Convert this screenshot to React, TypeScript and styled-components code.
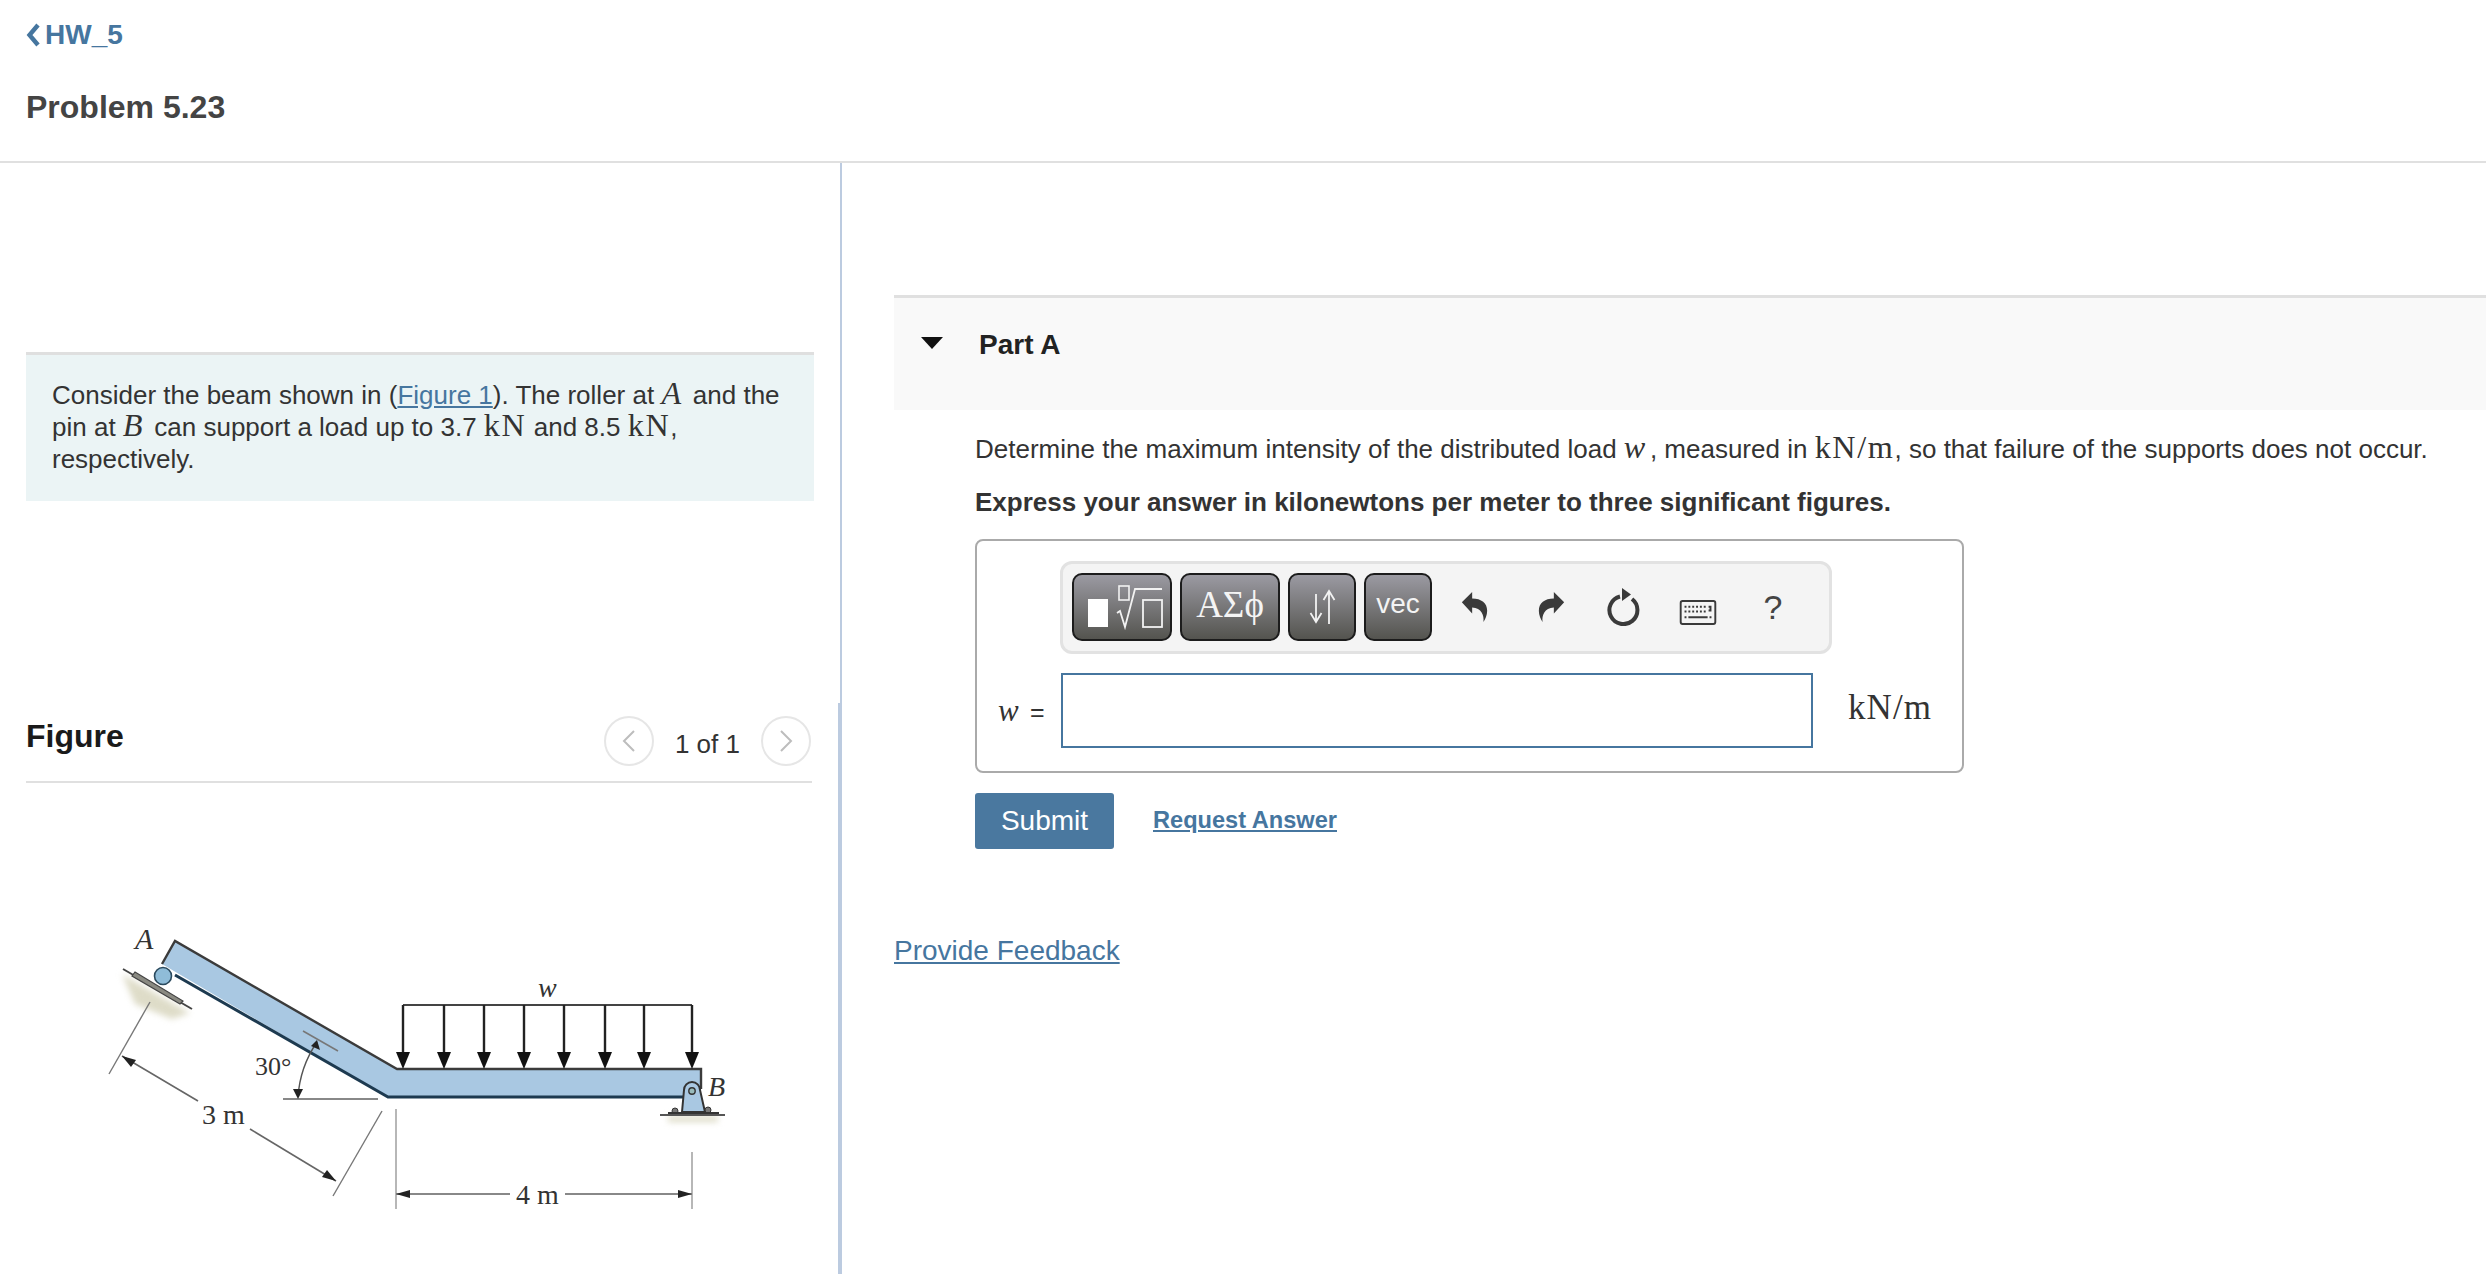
import React from "react";
import styled, { createGlobalStyle } from "styled-components";

const Global = createGlobalStyle`
  html, body { margin: 0; padding: 0; background: #fff; }
  body { font-family: "Liberation Sans", Arial, sans-serif; color: #333; }
`;

const Page = styled.div`
  width: 2486px;
  height: 1274px;
  overflow: hidden;
  display: flex;
  flex-direction: column;
  background: #fff;
`;

const Header = styled.header`
  height: 161px;
  box-sizing: content-box;
  border-bottom: 2px solid #e0e0e0;
  padding-left: 26px;
  display: flex;
  flex-direction: column;
`;

const BackLink = styled.a`
  display: flex;
  align-items: center;
  gap: 5px;
  height: 32px;
  margin-top: 19px;
  font-size: 28px;
  font-weight: 700;
  color: #46769f;
  text-decoration: none;
`;

const Title = styled.h1`
  margin: 38px 0 0;
  font-size: 32px;
  line-height: 36px;
  font-weight: 700;
  color: #444;
`;

const Columns = styled.div`
  flex: 1;
  display: flex;
  min-height: 0;
`;

const LeftColumn = styled.section`
  position: relative;
  width: 840px;
  flex: none;
  box-sizing: content-box;
  border-right: 2px solid #bccbe0;
  padding: 189px 0 0 0;
  display: flex;
  flex-direction: column;
  &::after {
    content: "";
    position: absolute;
    right: 0;
    top: 540px;
    bottom: 0;
    width: 2px;
    background: #bccbe0;
  }
`;

const InfoBox = styled.div`
  margin: 0 26px;
  width: 788px;
  box-sizing: border-box;
  height: 149px;
  border-top: 3px solid #dfdfdf;
  background: #ebf4f5;
  padding: 24px 26px 0;
  font-size: 26px;
  line-height: 32px;
  color: #333;
`;

const TextLink = styled.a`
  color: #46769f;
  text-decoration: underline;
`;

const Math = styled.span<{ $italic?: boolean }>`
  font-family: "Liberation Serif", "Times New Roman", serif;
  font-size: 1.24em;
  letter-spacing: ${(p) => (p.$italic ? "0.14em" : "0.05em")};
  font-style: ${(p) => (p.$italic ? "italic" : "normal")};
  line-height: 0;
`;

const FigureHeader = styled.div`
  margin: 215px 28px 0 26px;
  height: 65px;
  border-bottom: 2px solid #e0e0e0;
  display: flex;
  align-items: flex-start;
  justify-content: space-between;
`;

const FigureTitle = styled.h2`
  margin: 2px 0 0;
  font-size: 32px;
  line-height: 36px;
  font-weight: 700;
  color: #1a1a1a;
`;

const Pager = styled.div`
  display: flex;
  align-items: center;
  height: 50px;
  margin-right: 1px;
  gap: 21px;
  font-size: 26px;
`;

const PagerLabel = styled.span`
  position: relative;
  top: 3px;
  color: #333;
`;

const RoundButton = styled.div`
  width: 50px;
  height: 50px;
  box-sizing: border-box;
  border: 2px solid #e6e6e6;
  border-radius: 50%;
  display: flex;
  align-items: center;
  justify-content: center;
`;

const Diagram = styled.svg`
  display: block;
  margin-left: 26px;
  width: 788px;
  height: 490px;
  text {
    font-family: "Liberation Serif", "Times New Roman", serif;
    fill: #333;
  }
`;

const Soft = styled.g`
  filter: blur(0.6px);
`;

const Shade = styled.g`
  filter: blur(3px);
`;

const RightColumn = styled.section`
  flex: 1;
  min-width: 0;
  padding: 132px 0 0 52px;
  display: flex;
  flex-direction: column;
`;

const PartHeader = styled.div`
  height: 112px;
  box-sizing: content-box;
  border-top: 3px solid #e0e0e0;
  background: #f9f9f9;
  display: flex;
  align-items: flex-start;
`;

const Caret = styled.span`
  width: 0;
  height: 0;
  margin: 39px 36px 0 27px;
  border-left: 11px solid transparent;
  border-right: 11px solid transparent;
  border-top: 12px solid #111;
`;

const PartTitle = styled.h3`
  margin: 31px 0 0;
  font-size: 28px;
  line-height: 32px;
  font-weight: 700;
  color: #222;
`;

const PartBody = styled.div`
  padding-left: 81px;
  display: flex;
  flex-direction: column;
  align-items: flex-start;
`;

const Prompt = styled.p`
  margin: 24px 0 0;
  font-size: 26px;
  line-height: 30px;
  white-space: nowrap;
`;

const Instruction = styled.p`
  margin: 23px 0 0;
  font-size: 26px;
  line-height: 30px;
  font-weight: 700;
  white-space: nowrap;
`;

const AnswerBox = styled.div`
  margin-top: 22px;
  width: 989px;
  height: 234px;
  box-sizing: border-box;
  border: 2px solid #aaa;
  border-radius: 8px;
  padding: 20px 0 0 83px;
  display: flex;
  flex-direction: column;
`;

const Toolbar = styled.div`
  width: 772px;
  height: 93px;
  box-sizing: border-box;
  border: 3px solid #e2e2e2;
  border-radius: 12px;
  background: #f4f4f4;
  padding: 9px 0 0 9px;
  display: flex;
  align-items: flex-start;
`;

const ToolButton = styled.div<{ $w: number; $gap?: number }>`
  width: ${(p) => p.$w}px;
  height: 68px;
  margin-right: ${(p) => p.$gap ?? 8}px;
  box-sizing: border-box;
  border: 2px solid #1c1c1c;
  border-radius: 10px;
  background: linear-gradient(#9b9aa2, #54544f);
  color: #fff;
  display: flex;
  align-items: center;
  justify-content: center;
`;

const SymbolText = styled.span`
  font-family: "Liberation Serif", serif;
  font-size: 37px;
  line-height: 40px;
  color: #f4f4f4;
  position: relative;
  top: -2px;
`;

const VecText = styled.span`
  font-size: 28px;
  color: #f4f4f4;
  position: relative;
  top: -3px;
`;

const ToolIcon = styled.div<{ $w: number }>`
  width: ${(p) => p.$w}px;
  flex: none;
  height: 68px;
  display: flex;
  align-items: center;
  justify-content: center;
`;

const HelpGlyph = styled.span`
  font-size: 34px;
  color: #444;
`;

const InputRow = styled.div`
  position: relative;
  margin-top: 19px;
  height: 75px;
  display: flex;
  align-items: center;
`;

const VarLabel = styled.span`
  position: absolute;
  left: -62px;
  top: 24px;
  font-size: 25px;
  line-height: 30px;
  white-space: nowrap;
  color: #333;
`;

const AnswerInput = styled.div`
  margin-left: 1px;
  width: 752px;
  height: 75px;
  box-sizing: border-box;
  border: 2px solid #46769f;
  background: #fff;
`;

const Unit = styled.span`
  margin: 0 0 6px 35px;
  font-family: "Liberation Serif", serif;
  font-size: 35px;
  letter-spacing: 0.03em;
  color: #333;
`;

const Actions = styled.div`
  margin-top: 20px;
  display: flex;
  align-items: center;
  gap: 39px;
`;

const SubmitButton = styled.button`
  width: 139px;
  height: 56px;
  border: 0;
  border-radius: 3px;
  background: #4a789f;
  color: #fff;
  font-family: inherit;
  font-size: 28px;
  padding: 0;
`;

const RequestLink = styled.a`
  margin-bottom: 2px;
  font-size: 23.6px;
  font-weight: 700;
  color: #46769f;
  text-decoration: underline;
`;

const Feedback = styled.a`
  margin-top: 86px;
  font-size: 28px;
  line-height: 32px;
  color: #46769f;
  text-decoration: underline;
`;

const Undo = ({ flip }: { flip?: boolean }) => (
  <svg width="27" height="30" viewBox="0 0 27 32" style={flip ? { transform: "scaleX(-1)" } : undefined}>
    <path
      d="M0 11 L11 0 V7 C21 7 27 12 27 20 C27 25 25 29 23 32 C24 25 21 17 11 16.5 V23 Z"
      fill="#3a3a3a"
    />
  </svg>
);

const Refresh = () => (
  <svg width="34" height="38" viewBox="0 0 34 38">
    <path d="M25 11 A14 14 0 1 1 13 8.5" fill="none" stroke="#3a3a3a" strokeWidth="4" />
    <path d="M15 0 L24 6.5 L15 13 Z" fill="#3a3a3a" />
  </svg>
);

const Keyboard = () => (
  <svg width="38" height="25" viewBox="0 0 38 26" style={{ marginTop: 10 }}>
    <rect x="1" y="1" width="36" height="24" rx="2" fill="#f4f4f4" stroke="#3a3a3a" strokeWidth="2" />
    <path
      d="M5 6h2v2H5zM9 6h2v2H9zM13 6h2v2h-2zM17 6h2v2h-2zM21 6h2v2h-2zM25 6h2v2h-2zM30 6h3v6h-3v-2h1V8h-1zM5 11h2v2H5zM9 11h2v2H9zM13 11h2v2h-2zM17 11h2v2h-2zM21 11h2v2h-2zM25 11h2v2h-2zM5 17h2v2H5zM9 17h20v2H9zM31 17h2v2h-2z"
      fill="#3a3a3a"
    />
  </svg>
);

const RadicalIcon = () => (
  <svg width="96" height="64" viewBox="0 0 96 64">
    <rect x="14" y="24" width="20" height="28" fill="#fff" />
    <rect x="45" y="11" width="10" height="14" fill="none" stroke="#f2f2f2" strokeWidth="1.6" />
    <path d="M43 38 L46 36 L51 52 L61 14 H88" fill="none" stroke="#f2f2f2" strokeWidth="1.8" />
    <rect x="69" y="25" width="19" height="27" fill="none" stroke="#f2f2f2" strokeWidth="1.8" />
  </svg>
);

const ArrowsIcon = () => (
  <svg width="30" height="38" viewBox="0 0 30 38">
    <path d="M9 6 V33 M3.5 25 L9 34 L14.5 25" fill="none" stroke="#f2f2f2" strokeWidth="1.8" />
    <path d="M22 36 V3 M16.5 12 L22 3 L27.5 12" fill="none" stroke="#f2f2f2" strokeWidth="1.8" />
  </svg>
);

const Chevron = ({ right }: { right?: boolean }) => (
  <svg width="14" height="24" viewBox="0 0 14 24">
    <path d={right ? "M2 2 L12 12 L2 22" : "M12 2 L2 12 L12 22"} fill="none" stroke="#bdbdbd" strokeWidth="2" />
  </svg>
);

const loadArrows = [403, 444, 484, 524, 564, 605, 644, 692];

const BeamFigure = () => (
  <Diagram viewBox="26 784 788 490">
    <Shade>
      <path d="M122 975 L190 1014 L172 1020 L135 1005 Z" fill="#dedcc8" />
      <rect x="668" y="1117" width="50" height="6" fill="#dedcc8" />
    </Shade>
    <Soft>
      <polygon points="175,942 162,965 388,1098 701,1098 701,1070 397,1070" fill="#a9c8e2" />
      <path d="M162 965 L175 942 L397 1070 H701 V1090" fill="none" stroke="#3b3b3b" strokeWidth="2.4" />
      <path d="M175 976 L388 1098 H684" fill="none" stroke="#1d3a50" strokeWidth="3" />
      <path d="M123 970 L192 1010" stroke="#444" strokeWidth="2" />
      <path d="M135 973 L183 1002 L180 1005 L132 977 Z" fill="#8a8a82" stroke="#444" strokeWidth="1.2" />
      <circle cx="163" cy="977" r="8.5" fill="#8fbcd8" stroke="#2b4a5e" strokeWidth="1.6" />

      <path d="M403 1006 H692" stroke="#444" strokeWidth="1.8" />
      {loadArrows.map((x) => (
        <g key={x}>
          <path d={`M${x} 1006 V1056`} stroke="#222" strokeWidth="2.4" />
          <path d={`M${x - 7} 1053 H${x + 7} L${x} 1070 Z`} fill="#111" />
        </g>
      ))}

      <path d="M682 1113 L684 1091 A8 8 0 0 1 700 1091 L705 1113 Z" fill="#a9c8e2" stroke="#333" strokeWidth="2" />
      <circle cx="692" cy="1092" r="3.2" fill="#9bb" stroke="#333" strokeWidth="1.4" />
      <circle cx="675" cy="1112" r="3" fill="#777" stroke="#333" />
      <circle cx="708" cy="1111" r="3" fill="#777" stroke="#333" />
      <path d="M668 1114 H719" stroke="#333" strokeWidth="2" />
      <path d="M660 1116 H725" stroke="#555" strokeWidth="2" />

      <path d="M150 1003 L109 1075" stroke="#777" strokeWidth="1.4" />
      <path d="M122 1057 L198 1102" stroke="#666" strokeWidth="1.6" />
      <path d="M122 1057 L136 1061 L131 1068 Z" fill="#222" />
      <path d="M250 1130 L336 1182" stroke="#666" strokeWidth="1.6" />
      <path d="M336 1182 L322 1178 L327 1171 Z" fill="#222" />
      <path d="M382 1112 L333 1197" stroke="#777" strokeWidth="1.4" />

      <path d="M283 1100 H378" stroke="#888" strokeWidth="2" />
      <path d="M303 1032 L338 1052" stroke="#777" strokeWidth="1.6" />
      <path d="M317 1043 Q300 1068 298 1098" fill="none" stroke="#555" strokeWidth="1.4" />
      <path d="M317 1041 L320 1051 L311 1047 Z" fill="#222" />
      <path d="M298 1100 L293 1090 H303 Z" fill="#222" />

      <path d="M396 1110 V1210" stroke="#999" strokeWidth="1.4" />
      <path d="M692 1153 V1210" stroke="#999" strokeWidth="1.4" />
      <path d="M396 1195 H510" stroke="#888" strokeWidth="1.8" />
      <path d="M565 1195 H692" stroke="#888" strokeWidth="1.8" />
      <path d="M396 1195 L410 1191 V1199 Z" fill="#222" />
      <path d="M692 1195 L678 1191 V1199 Z" fill="#222" />
    </Soft>
    <text x="135" y="950" fontSize="30" fontStyle="italic">A</text>
    <text x="538" y="998" fontSize="28" fontStyle="italic">w</text>
    <text x="708" y="1097" fontSize="28" fontStyle="italic">B</text>
    <text x="255" y="1076" fontSize="26">30°</text>
    <text x="202" y="1125" fontSize="28">3 m</text>
    <text x="516" y="1205" fontSize="28">4 m</text>
  </Diagram>
);

export default function App() {
  return (
    <Page>
      <Global />
      <Header>
        <BackLink>
          <svg width="14" height="24" viewBox="0 0 14 24">
            <path d="M12 2 L3.5 12 L12 22" fill="none" stroke="#46769f" strokeWidth="4.4" />
          </svg>
          HW_5
        </BackLink>
        <Title>Problem 5.23</Title>
      </Header>
      <Columns>
        <LeftColumn>
          <InfoBox>
            Consider the beam shown in (<TextLink>Figure 1</TextLink>). The roller at <Math $italic>A</Math> and the pin at{" "}
            <Math $italic>B</Math> can support a load up to 3.7 <Math>kN</Math> and 8.5 <Math>kN</Math>, respectively.
          </InfoBox>
          <FigureHeader>
            <FigureTitle>Figure</FigureTitle>
            <Pager>
              <RoundButton>
                <Chevron />
              </RoundButton>
              <PagerLabel>1 of 1</PagerLabel>
              <RoundButton>
                <Chevron right />
              </RoundButton>
            </Pager>
          </FigureHeader>
          <BeamFigure />
        </LeftColumn>
        <RightColumn>
          <PartHeader>
            <Caret />
            <PartTitle>Part A</PartTitle>
          </PartHeader>
          <PartBody>
            <Prompt>
              Determine the maximum intensity of the distributed load <Math $italic>w</Math>, measured in <Math>kN/m</Math>, so
              that failure of the supports does not occur.
            </Prompt>
            <Instruction>Express your answer in kilonewtons per meter to three significant figures.</Instruction>
            <AnswerBox>
              <Toolbar>
                <ToolButton $w={100}>
                  <RadicalIcon />
                </ToolButton>
                <ToolButton $w={100}>
                  <SymbolText>ΑΣϕ</SymbolText>
                </ToolButton>
                <ToolButton $w={68}>
                  <ArrowsIcon />
                </ToolButton>
                <ToolButton $w={68} $gap={14}>
                  <VecText>vec</VecText>
                </ToolButton>
                <ToolIcon $w={57}>
                  <Undo />
                </ToolIcon>
                <ToolIcon $w={97}>
                  <Undo flip />
                </ToolIcon>
                <ToolIcon $w={48}>
                  <Refresh />
                </ToolIcon>
                <ToolIcon $w={100}>
                  <Keyboard />
                </ToolIcon>
                <ToolIcon $w={50}>
                  <HelpGlyph>?</HelpGlyph>
                </ToolIcon>
              </Toolbar>
              <InputRow>
                <VarLabel>
                  <Math $italic>w</Math> =
                </VarLabel>
                <AnswerInput />
                <Unit>kN/m</Unit>
              </InputRow>
            </AnswerBox>
            <Actions>
              <SubmitButton>Submit</SubmitButton>
              <RequestLink>Request Answer</RequestLink>
            </Actions>
          </PartBody>
          <Feedback>Provide Feedback</Feedback>
        </RightColumn>
      </Columns>
    </Page>
  );
}
